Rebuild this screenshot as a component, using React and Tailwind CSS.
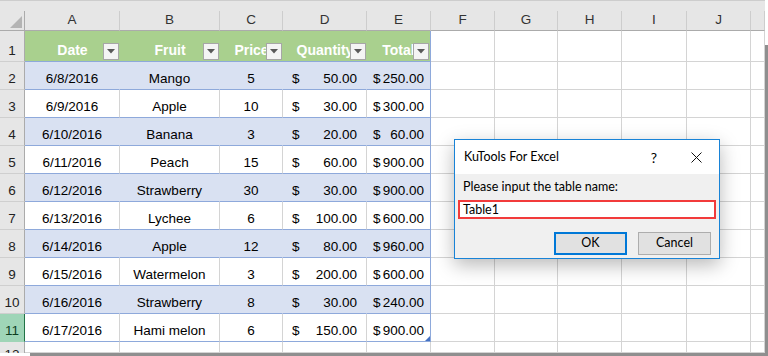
import React from 'react';

const colW = ['w-[95px]', 'w-[100px]', 'w-[63px]', 'w-[84px]', 'w-[64px]', 'w-[64px]', 'w-[63px]', 'w-[64px]', 'w-[65px]', 'w-[64px]', 'w-[14px]'];
const letters = ['A', 'B', 'C', 'D', 'E', 'F', 'G', 'H', 'I', 'J', ''];

const rows = [
  ['6/8/2016', 'Mango', '5', '50.00', '250.00'],
  ['6/9/2016', 'Apple', '10', '30.00', '300.00'],
  ['6/10/2016', 'Banana', '3', '20.00', '60.00'],
  ['6/11/2016', 'Peach', '15', '60.00', '900.00'],
  ['6/12/2016', 'Strawberry', '30', '30.00', '900.00'],
  ['6/13/2016', 'Lychee', '6', '100.00', '600.00'],
  ['6/14/2016', 'Apple', '12', '80.00', '960.00'],
  ['6/15/2016', 'Watermelon', '3', '200.00', '600.00'],
  ['6/16/2016', 'Strawberry', '8', '30.00', '240.00'],
  ['6/17/2016', 'Hami melon', '6', '150.00', '900.00'],
];

const FilterButton = () => (
  <div className="absolute right-[1px] bottom-[1px] w-[16px] h-[17px] bg-[#f4f4f4] border border-[#a6a6a6] flex items-center justify-center">
    <svg width="8" height="5" viewBox="0 0 8 5">
      <polygon points="0,0 8,0 4,4.5" fill="#595959" />
    </svg>
  </div>
);

const RowHeader = ({ n, h, active }) => (
  <div
    className={`w-[25px] ${h} shrink-0 flex items-end justify-center pb-[2px] leading-[16px] text-[13.5px] border-b border-r ${
      active ? 'bg-[#9fd5b7] border-b-[#9fd5b7] border-r-[#217346] text-[#0d3e1f]' : 'bg-[#e6e6e6] border-b-[#cfcfcf] border-r-[#ababab] text-[#222]'
    } overflow-hidden`}
  >
    {n}
  </div>
);

const EmptyCells = ({ from, h }) =>
  colW.slice(from).map((w, i) => (
    <div key={i} className={`${w} ${h} shrink-0 border-b border-r border-[#d4d4d4] bg-white`} />
  ));

const cellBase = 'h-[28px] shrink-0 border-b border-r border-b-[#8ea9db] flex items-end pb-[2px] leading-[16px] text-[13.5px] text-black';

const Sheet = () => (
  <div className="w-[765px] shrink-0">
    <div className="h-[11px] bg-[#e6e6e6] border-t border-[#cdcdcd]" />
    <div className="flex h-[20px] bg-[#e6e6e6]">
      <div className="w-[25px] shrink-0 border-b border-r border-[#ababab] flex items-end justify-end pr-[2px] pb-[2px]">
        <svg width="12" height="12" viewBox="0 0 12 12">
          <polygon points="12,0 12,12 0,12" fill="#b4b4b4" />
        </svg>
      </div>
      {colW.map((w, i) => (
        <div
          key={i}
          className={`${w} shrink-0 border-b border-r border-b-[#ababab] border-r-[#cdcdcd] flex items-center justify-center text-[13.5px] text-[#333]`}
        >
          {letters[i]}
        </div>
      ))}
    </div>

    <div className="flex h-[31px]">
      <RowHeader n="1" h="h-[31px]" />
      {['Date', 'Fruit', 'Price', 'Quantity', 'Total'].map((t, i) => (
        <div
          key={t}
          className={`${colW[i]} relative shrink-0 h-[31px] bg-[#a9d08e] border-b border-b-[#8ea9db] overflow-hidden flex items-end justify-center pb-[3px] ${
            i === 4 ? 'border-r border-r-[#8ea9db]' : ''
          }`}
        >
          <span className="text-white font-bold text-[14px] leading-[16px] whitespace-nowrap">{t}</span>
          <FilterButton />
        </div>
      ))}
      <EmptyCells from={5} h="h-[31px]" />
    </div>

    {rows.map((r, ri) => {
      const n = ri + 2;
      const band = n % 2 === 0;
      const bg = band ? 'bg-[#d9e1f2]' : 'bg-white';
      const vline = band ? 'border-r-[#d9e1f2]' : 'border-r-[#d4d4d4]';
      return (
        <div key={n} className="flex h-[28px]">
          <RowHeader n={n} h="h-[28px]" active={n === 11} />
          <div className={`${colW[0]} ${cellBase} ${bg} ${vline} justify-center`}>{r[0]}</div>
          <div className={`${colW[1]} ${cellBase} ${bg} ${vline} justify-center`}>{r[1]}</div>
          <div className={`${colW[2]} ${cellBase} ${bg} ${vline} justify-center`}>{r[2]}</div>
          <div className={`${colW[3]} ${cellBase} ${bg} ${vline} justify-between px-[9px]`}>
            <span>$</span>
            <span>{r[3]}</span>
          </div>
          <div className={`${colW[4]} relative ${cellBase} ${bg} border-r-[#8ea9db] justify-between pl-[6px] pr-[6px]`}>
            <span>$</span>
            <span>{r[4]}</span>
            {n === 11 && (
              <svg className="absolute right-0 bottom-0" width="5" height="5" viewBox="0 0 5 5">
                <polygon points="5,0 5,5 0,5" fill="#4472c4" />
              </svg>
            )}
          </div>
          <EmptyCells from={5} h="h-[28px]" />
        </div>
      );
    })}

    <div className="flex h-[11px] overflow-hidden">
      <div className="w-[25px] h-[11px] shrink-0 bg-[#e6e6e6] border-r border-[#ababab] flex justify-center pt-[5px] leading-[16px] text-[13.5px] text-[#222] overflow-hidden">
        12
      </div>
      <EmptyCells from={0} h="h-[11px]" />
    </div>
  </div>
);

const Dialog = () => (
  <div className="absolute left-[454px] top-[139px] w-[266px] h-[120px] bg-[#f0f0f0] border border-[#1883d7] shadow-[0_6px_18px_rgba(0,0,0,0.28)] font-['Lato','Noto_Sans',sans-serif] text-[12.5px] text-black flex flex-col">
    <div className="h-[34px] bg-white flex items-center pl-[9px] shrink-0">
      <span className="flex-1">KuTools For Excel</span>
      <span className="w-[20px] text-center text-[14px] mr-[27px]">?</span>
      <svg className="mr-[17px]" width="11" height="11" viewBox="0 0 11 11">
        <path d="M0.5 0.5 L10.5 10.5 M10.5 0.5 L0.5 10.5" stroke="#111" strokeWidth="1" />
      </svg>
    </div>
    <div className="flex flex-col px-[3px] pt-[5px]">
      <div className="pl-[5px] leading-[16px]">Please input the table name:</div>
      <div className="mt-[5px] h-[19px] border-2 border-[#f23b3b] bg-white flex items-center pl-[3px] leading-[14px]">
        Table1
      </div>
      <div className="flex justify-end gap-[11px] mt-[13px] pr-[5px]">
        <div className="w-[73px] h-[23px] bg-[#e1e1e1] border-2 border-[#0078d7] flex items-center justify-center">OK</div>
        <div className="w-[73px] h-[23px] bg-[#e1e1e1] border border-[#adadad] flex items-center justify-center">Cancel</div>
      </div>
    </div>
  </div>
);

export default function App() {
  return (
    <div className="relative w-[768px] h-[356px] overflow-hidden bg-white font-['Liberation_Sans',Arial,sans-serif]">
      <div className="flex">
        <Sheet />
        <div className="w-[3px] h-[308px] mt-[45px] bg-[#8f8f8f]" />
      </div>
      <div className="ml-[30px] h-[3px] bg-[#8f8f8f]" />
      <Dialog />
    </div>
  );
}
